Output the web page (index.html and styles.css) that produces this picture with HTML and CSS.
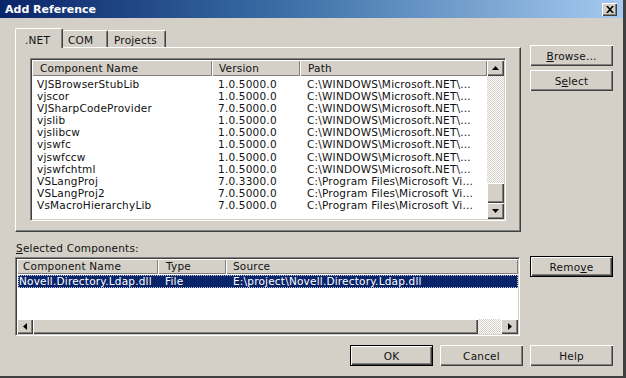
FILE: index.html
```html
<!DOCTYPE html>
<html>
<head>
<meta charset="utf-8">
<title>Add Reference</title>
<link rel="stylesheet" href="styles.css">
</head>
<body>
<div class="dialog">
  <div class="titlebar">
    <span class="title">Add Reference</span>
    <span class="close"><svg width="8" height="7" viewBox="0 0 8 7"><path d="M0 0h2l2 2.2L6 0h2L5 3.5 8 7H6L4 4.8 2 7H0l3-3.5z" fill="#000"/></svg></span>
  </div>
  <div class="content">
    <div class="tabarea">
      <div class="tabs">
        <div class="tab active">.NET</div>
        <div class="tab">COM</div>
        <div class="tab">Projects</div>
      </div>
      <div class="panel">
        <div class="listview big">
          <div class="lv-main">
            <div class="lv-header">
              <div class="hcell c-name">Component Name</div>
              <div class="hcell c-ver">Version</div>
              <div class="hcell c-path">Path</div>
            </div>
            <div class="lv-rows">
              <div class="row"><span class="c-name">VJSBrowserStubLib</span><span class="c-ver">1.0.5000.0</span><span class="c-path">C:\WINDOWS\Microsoft.NET\...</span></div>
              <div class="row"><span class="c-name">vjscor</span><span class="c-ver">1.0.5000.0</span><span class="c-path">C:\WINDOWS\Microsoft.NET\...</span></div>
              <div class="row"><span class="c-name">VJSharpCodeProvider</span><span class="c-ver">7.0.5000.0</span><span class="c-path">C:\WINDOWS\Microsoft.NET\...</span></div>
              <div class="row"><span class="c-name">vjslib</span><span class="c-ver">1.0.5000.0</span><span class="c-path">C:\WINDOWS\Microsoft.NET\...</span></div>
              <div class="row"><span class="c-name">vjslibcw</span><span class="c-ver">1.0.5000.0</span><span class="c-path">C:\WINDOWS\Microsoft.NET\...</span></div>
              <div class="row"><span class="c-name">vjswfc</span><span class="c-ver">1.0.5000.0</span><span class="c-path">C:\WINDOWS\Microsoft.NET\...</span></div>
              <div class="row"><span class="c-name">vjswfccw</span><span class="c-ver">1.0.5000.0</span><span class="c-path">C:\WINDOWS\Microsoft.NET\...</span></div>
              <div class="row"><span class="c-name">vjswfchtml</span><span class="c-ver">1.0.5000.0</span><span class="c-path">C:\WINDOWS\Microsoft.NET\...</span></div>
              <div class="row"><span class="c-name">VSLangProj</span><span class="c-ver">7.0.3300.0</span><span class="c-path">C:\Program Files\Microsoft Vi...</span></div>
              <div class="row"><span class="c-name">VSLangProj2</span><span class="c-ver">7.0.5000.0</span><span class="c-path">C:\Program Files\Microsoft Vi...</span></div>
              <div class="row"><span class="c-name">VsMacroHierarchyLib</span><span class="c-ver">7.0.5000.0</span><span class="c-path">C:\Program Files\Microsoft Vi...</span></div>
            </div>
          </div>
          <div class="vscroll">
            <div class="sbtn"><svg width="7" height="4" viewBox="0 0 7 4"><path d="M3.5 0L7 4H0z" fill="#000"/></svg></div>
            <div class="track"></div>
            <div class="thumb"></div>
            <div class="sbtn"><svg width="7" height="4" viewBox="0 0 7 4"><path d="M0 0h7L3.5 4z" fill="#000"/></svg></div>
          </div>
        </div>
      </div>
    </div>
    <div class="side side-top">
      <div class="btn"><u>B</u>rowse...</div>
      <div class="btn">S<u>e</u>lect</div>
    </div>
    <div class="selected">
      <div class="label"><u>S</u>elected Components:</div>
      <div class="listview small">
        <div class="lv-header">
          <div class="hcell s-name">Component Name</div>
          <div class="hcell s-type">Type</div>
          <div class="hcell s-src">Source</div>
        </div>
        <div class="lv-rows2">
          <div class="row sel"><span class="s-name">Novell.Directory.Ldap.dll</span><span class="s-type">File</span><span class="s-src">E:\project\Novell.Directory.Ldap.dll</span></div>
        </div>
        <div class="hscroll">
          <div class="sbtn h"><svg width="4" height="7" viewBox="0 0 4 7"><path d="M0 3.5L4 0v7z" fill="#000"/></svg></div>
          <div class="hthumb"></div>
          <div class="htrack"></div>
          <div class="sbtn h"><svg width="4" height="7" viewBox="0 0 4 7"><path d="M0 0l4 3.5L0 7z" fill="#000"/></svg></div>
        </div>
      </div>
    </div>
    <div class="side side-mid">
      <div class="btn default">Remo<u>v</u>e</div>
    </div>
    <div class="bottom">
      <div class="btn default">OK</div>
      <div class="btn">Cancel</div>
      <div class="btn">Help</div>
    </div>
  </div>
</div>
</body>
</html>
```

FILE: styles.css
```css
* { box-sizing: border-box; }
html, body { margin: 0; padding: 0; background: #d4d0c8; }
body {
  font-family: "DejaVu Sans", Verdana, sans-serif;
  font-size: 10.5px;
  letter-spacing: 0.2px;
  color: #111;
}
u { text-decoration: underline; text-underline-offset: 1px; }

.dialog {
  width: 626px;
  height: 378px;
  background: #d4d0c8;
  display: flex;
  flex-direction: column;
  overflow: hidden;
  border-right: 3px solid #404040;
  border-bottom: 2px solid #404040;
}

.titlebar {
  height: 18px;
  flex: none;
  background: linear-gradient(to right, #0a246a 0%, #3a6ea5 45%, #a6caf0 100%);
  display: flex;
  align-items: center;
  justify-content: space-between;
  padding: 0 6px 0 5px;
}
.title {
  color: #fff;
  font-weight: bold;
  font-size: 11px;
  letter-spacing: 0;
}
.close {
  width: 15px;
  height: 13px;
  background: #d4d0c8;
  box-shadow: inset 1px 1px #fff, inset -1px -1px #404040, inset -2px -2px #808080;
  display: flex;
  align-items: center;
  justify-content: center;
}

.content {
  display: grid;
  grid-template-columns: 506px 83px;
  column-gap: 9px;
  padding: 10px 0 0 15px;
}

/* tabs */
.tabarea { display: flex; flex-direction: column; }
.tabs {
  height: 19px;
  display: flex;
  align-items: flex-end;
  position: relative;
  z-index: 1;
}
.tab {
  height: 17px;
  padding: 3px 8px 0 8px;
  border-top: 1px solid #fff;
  border-left: 1px solid #fff;
  border-right: 1px solid #404040;
  box-shadow: inset -1px 0 #808080;
  border-radius: 2px 2px 0 0;
  line-height: 12px;
  white-space: nowrap;
}
.tab:first-child { width: 48px; padding-left: 9px; }
.tab:nth-child(2) { width: 45px; padding-left: 5px; border-left: none; }
.tab:nth-child(3) { width: 58px; padding-left: 6px; border-left: none; }
.tab.active {
  height: 20px;
  margin-bottom: -1px;
  background: #d4d0c8;
  padding-top: 5px;
}
.panel {
  height: 185px;
  border-top: 1px solid #fff;
  border-left: 1px solid #fff;
  border-right: 1px solid #404040;
  border-bottom: 1px solid #404040;
  box-shadow: inset -1px -1px #808080;
  padding: 10px 0 0 14px;
}

/* list views */
.listview {
  background: #fff;
  border-top: 1px solid #808080;
  border-left: 1px solid #808080;
  border-right: 1px solid #fff;
  border-bottom: 1px solid #fff;
  box-shadow: inset 1px 1px #404040, inset -1px -1px #d4d0c8;
  padding: 1px;
}
.listview.big {
  width: 476px;
  height: 163px;
  display: flex;
}
.lv-main { width: 455px; display: flex; flex-direction: column; }
.lv-header { display: flex; height: 16px; background: #d4d0c8; }
.hcell {
  height: 100%;
  line-height: 16px;
  box-shadow: inset 1px 1px #fff, inset -1px -1px #808080;
  white-space: nowrap;
  overflow: hidden;
}
.big .c-name { width: 180px; }
.big .c-ver { width: 88px; }
.big .c-path { width: 187px; }
.big .hcell.c-name { padding-left: 8px; }
.big .hcell.c-ver { padding-left: 7px; }
.big .hcell.c-path { padding-left: 8px; }

.lv-rows { padding-top: 2px; }
.row { display: flex; height: 12.1px; line-height: 12px; white-space: nowrap; }
.row span { overflow: hidden; }
.big .row .c-name { padding-left: 5px; }
.big .row .c-ver { padding-left: 6px; }
.big .row .c-path { padding-left: 7px; }

.vscroll {
  width: 17px;
  display: flex;
  flex-direction: column;
}
.sbtn {
  width: 17px;
  height: 16px;
  flex: none;
  background: #d4d0c8;
  box-shadow: inset 1px 1px #fff, inset -1px -1px #404040, inset -2px -2px #808080;
  display: flex;
  align-items: center;
  justify-content: center;
}
.track {
  flex: 1;
  background: repeating-conic-gradient(#d4d0c8 0 25%, #fff 0 50%) 0 0 / 2px 2px;
}
.thumb {
  height: 20px;
  flex: none;
  background: #d4d0c8;
  box-shadow: inset 1px 1px #fff, inset -1px -1px #404040, inset -2px -2px #808080;
}

/* selected section */
.selected { padding-top: 10px; }
.label { height: 15px; line-height: 13px; padding-left: 1px; }
.listview.small {
  width: 505px;
  height: 79px;
  display: flex;
  flex-direction: column;
}
.small .lv-header { height: 15px; }
.small .hcell { line-height: 15px; }
.s-name { width: 141px; }
.s-type { width: 68px; }
.s-src { flex: 1; }
.small .hcell.s-name { padding-left: 6px; }
.small .hcell.s-type { padding-left: 8px; }
.small .hcell.s-src { padding-left: 7px; }
.lv-rows2 { flex: 1; padding-top: 1px; }
.row.sel {
  height: 13px;
  line-height: 13px;
  background: #0a246a;
  color: #fff;
  outline: 1px dotted #c8c8d8;
  outline-offset: -1px;
  margin-left: 1px;
}
.row.sel .s-name { padding-left: 1px; width: 140px; }
.row.sel .s-type { padding-left: 7px; }
.row.sel .s-src { padding-left: 7px; }
.hscroll { height: 15px; display: flex; }
.sbtn.h { width: 16px; height: 15px; }
.hscroll .sbtn.h:last-child { width: 17px; }
.hthumb {
  width: 445px;
  background: #d4d0c8;
  box-shadow: inset 1px 1px #fff, inset -1px -1px #404040, inset -2px -2px #808080;
}
.htrack {
  flex: 1;
  background: repeating-conic-gradient(#d4d0c8 0 25%, #fff 0 50%) 0 0 / 2px 2px;
}

/* buttons */
.side { display: flex; flex-direction: column; gap: 4px; }
.side-top { padding-top: 17px; }
.side-mid { padding-top: 24px; }
.btn {
  width: 83px;
  height: 21px;
  background: #d4d0c8;
  box-shadow: inset 1px 1px #fff, inset -1px -1px #404040, inset -2px -2px #808080;
  display: flex;
  align-items: center;
  justify-content: center;
  line-height: 12px;
}
.btn.default {
  border: 1px solid #000;
}
.bottom {
  grid-column: 1 / 3;
  display: flex;
  justify-content: flex-end;
  gap: 7px;
  padding-top: 9px;
}
```
